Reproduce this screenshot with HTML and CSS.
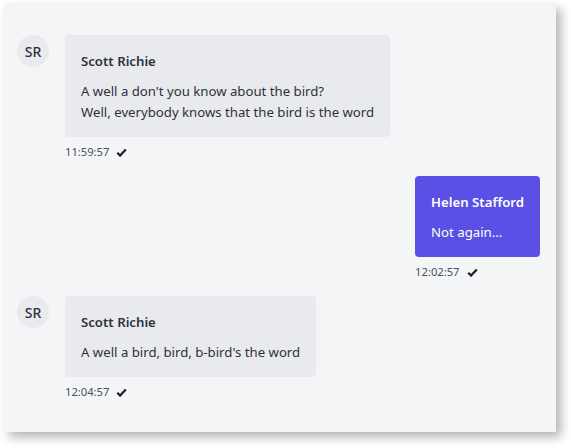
FILE: index.html
```html
<!DOCTYPE html>
<html>
<head>
<meta charset="utf-8">
<link rel="stylesheet" href="styles.css">
</head>
<body>
<div class="panel">
  <div class="msg">
    <div class="avatar">SR</div>
    <div class="col">
      <div class="bubble">
        <div class="name">Scott Richie</div>
        <div class="text">A well a don't you know about the bird?<br>Well, everybody knows that the bird is the word</div>
      </div>
      <div class="meta">11:59:57 <svg class="check" viewBox="0 0 12 10" width="11" height="9"><path d="M1.3 5.3 L4.4 8.3 L10.8 1.7" fill="none" stroke="#1f2128" stroke-width="2.6" stroke-linecap="butt" stroke-linejoin="miter"/></svg></div>
    </div>
  </div>
  <div class="msg mine">
    <div class="col">
      <div class="bubble">
        <div class="name">Helen Stafford</div>
        <div class="text">Not again...</div>
      </div>
      <div class="meta">12:02:57 <svg class="check" viewBox="0 0 12 10" width="11" height="9"><path d="M1.3 5.3 L4.4 8.3 L10.8 1.7" fill="none" stroke="#1f2128" stroke-width="2.6" stroke-linecap="butt" stroke-linejoin="miter"/></svg></div>
    </div>
  </div>
  <div class="msg">
    <div class="avatar">SR</div>
    <div class="col">
      <div class="bubble">
        <div class="name">Scott Richie</div>
        <div class="text">A well a bird, bird, b-bird's the word</div>
      </div>
      <div class="meta">12:04:57 <svg class="check" viewBox="0 0 12 10" width="11" height="9"><path d="M1.3 5.3 L4.4 8.3 L10.8 1.7" fill="none" stroke="#1f2128" stroke-width="2.6" stroke-linecap="butt" stroke-linejoin="miter"/></svg></div>
    </div>
  </div>
</div>
</body>
</html>
```
FILE: styles.css
```css
html, body {
  margin: 0;
  padding: 0;
  background: #ffffff;
}
body {
  font-family: "Noto Sans", "Open Sans", sans-serif;
  color: #2d313a;
  min-height: 448px;
}
.panel {
  margin: 4px 0 0 4px;
  width: 552px;
  height: 428px;
  box-sizing: border-box;
  background: #f4f5f7;
  box-shadow: 5px 5px 10px rgba(0, 0, 0, 0.3);
  padding: 31px 16px 0 13px;
  display: flex;
  flex-direction: column;
  gap: 16px;
}
.msg {
  display: flex;
  align-items: flex-start;
  gap: 16px;
}
.msg.mine {
  justify-content: flex-end;
}
.avatar {
  width: 32px;
  height: 32px;
  border-radius: 50%;
  background: #e9eaee;
  display: flex;
  align-items: center;
  justify-content: center;
  font-size: 14px;
  font-weight: 500;
  color: #2d313a;
  flex: none;
}
.col {
  display: flex;
  flex-direction: column;
  align-items: flex-start;
}
.bubble {
  background: #e9eaee;
  border-radius: 4px;
  padding: 16px 16px 14px 16px;
}
.mine .bubble {
  background: #5a50e5;
  color: #ffffff;
}
.name {
  font-size: 13.2px;
  font-weight: 600;
  line-height: 20px;
  margin-bottom: 10px;
}
.text {
  font-size: 13.2px;
  line-height: 21px;
}
.meta {
  margin-top: 7px;
  font-size: 11.2px;
  line-height: 16px;
  color: #4a4f5a;
  display: flex;
  align-items: center;
  gap: 7px;
}
.check {
  display: block;
}
```
